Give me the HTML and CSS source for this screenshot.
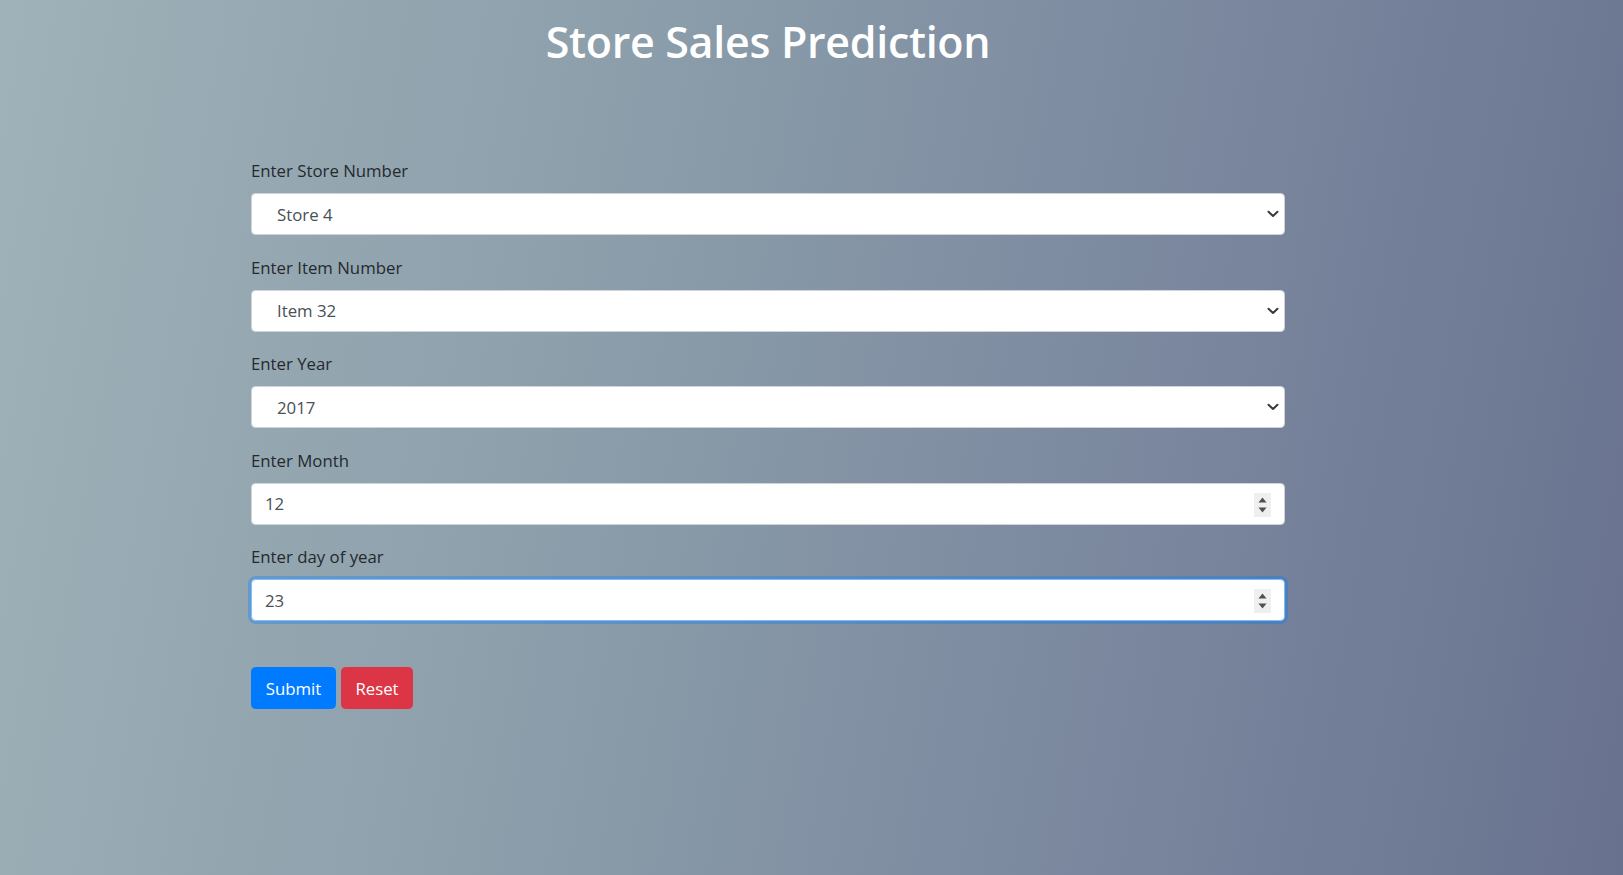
FILE: index.html
```html
<!DOCTYPE html>
<html lang="en">
<head>
<meta charset="utf-8">
<title>Store Sales Prediction</title>
<link rel="stylesheet" href="styles.css">
</head>
<body>
<div class="page">
  <h1 class="title">Store Sales Prediction</h1>
  <form class="form">
    <div class="group">
      <label class="label">Enter Store Number</label>
      <div class="control-wrap">
        <select class="control select"><option>Store 4</option></select>
        <svg class="chevron" width="12" height="8" viewBox="0 0 12 8"><path d="M1.5 1.8 L6 6 L10.5 1.8" fill="none" stroke="#343a40" stroke-width="2" stroke-linecap="round" stroke-linejoin="round"/></svg>
      </div>
    </div>
    <div class="group">
      <label class="label">Enter Item Number</label>
      <div class="control-wrap">
        <select class="control select"><option>Item 32</option></select>
        <svg class="chevron" width="12" height="8" viewBox="0 0 12 8"><path d="M1.5 1.8 L6 6 L10.5 1.8" fill="none" stroke="#343a40" stroke-width="2" stroke-linecap="round" stroke-linejoin="round"/></svg>
      </div>
    </div>
    <div class="group">
      <label class="label">Enter Year</label>
      <div class="control-wrap">
        <select class="control select"><option>2017</option></select>
        <svg class="chevron" width="12" height="8" viewBox="0 0 12 8"><path d="M1.5 1.8 L6 6 L10.5 1.8" fill="none" stroke="#343a40" stroke-width="2" stroke-linecap="round" stroke-linejoin="round"/></svg>
      </div>
    </div>
    <div class="group">
      <label class="label">Enter Month</label>
      <div class="control-wrap">
        <input class="control input" type="text" value="12">
        <div class="spinner">
          <svg width="9" height="6" viewBox="0 0 9 6"><path d="M4.5 0.5 L8.5 5.5 L0.5 5.5 Z" fill="#505050"/></svg>
          <svg width="9" height="6" viewBox="0 0 9 6"><path d="M0.5 0.5 L8.5 0.5 L4.5 5.5 Z" fill="#505050"/></svg>
        </div>
      </div>
    </div>
    <div class="group">
      <label class="label">Enter day of year</label>
      <div class="control-wrap">
        <input class="control input focused" type="text" value="23">
        <div class="spinner">
          <svg width="9" height="6" viewBox="0 0 9 6"><path d="M4.5 0.5 L8.5 5.5 L0.5 5.5 Z" fill="#505050"/></svg>
          <svg width="9" height="6" viewBox="0 0 9 6"><path d="M0.5 0.5 L8.5 0.5 L4.5 5.5 Z" fill="#505050"/></svg>
        </div>
      </div>
    </div>
    <div class="actions">
      <button type="button" class="btn btn-primary">Submit</button>
      <button type="button" class="btn btn-danger">Reset</button>
    </div>
  </form>
</div>
</body>
</html>
```

FILE: styles.css
```css
html, body {
  margin: 0;
  padding: 0;
}
body {
  min-height: 100vh;
  background: linear-gradient(100deg, #9fb2b9 0%, #8c9fab 35%, #7a879e 70%, #68728f 100%);
  font-family: "Open Sans", "Noto Sans", sans-serif;
  color: #25292d;
}
.page {
  width: 1536px;
}
.title {
  margin: 0;
  padding-top: 17px;
  text-align: center;
  color: #ffffff;
  font-size: 43px;
  font-weight: 600;
  line-height: 50px;
  letter-spacing: -0.3px;
}
.form {
  width: 1034px;
  margin: 91px auto 0;
}
.group {
  display: flex;
  flex-direction: column;
  margin-bottom: 19.5px;
}
.label {
  font-size: 16.8px;
  line-height: 26px;
  margin-bottom: 9px;
  color: #25292d;
}
.control-wrap {
  position: relative;
}
.control {
  box-sizing: border-box;
  display: block;
  width: 100%;
  height: 42px;
  margin: 0;
  border: 1px solid #ced4da;
  border-radius: 4.5px;
  background: #ffffff;
  color: #495057;
  font-family: "Open Sans", "Noto Sans", sans-serif;
  font-size: 16.8px;
  outline: none;
}
.select {
  -webkit-appearance: none;
  appearance: none;
  padding: 0 40px 0 25px;
}
.input {
  padding: 0 40px 0 13px;
}
.focused {
  border-color: #80bdff;
  box-shadow: 0 0 0 3px rgba(0, 123, 255, 0.32);
}
.chevron {
  position: absolute;
  right: 6px;
  top: 17px;
}
.spinner {
  position: absolute;
  right: 14px;
  top: 10px;
  width: 17px;
  height: 24px;
  background: #efefef;
  display: flex;
  flex-direction: column;
  align-items: center;
  justify-content: center;
  gap: 4px;
}
.spinner svg {
  display: block;
}
.actions {
  display: flex;
  gap: 5px;
  margin-top: 46px;
}
.btn {
  height: 42px;
  border: 1px solid transparent;
  border-radius: 4.5px;
  color: #ffffff;
  font-family: "Open Sans", "Noto Sans", sans-serif;
  font-size: 16.8px;
  padding: 0 10px;
  cursor: pointer;
}
.btn-primary {
  background: #007bff;
  border-color: #007bff;
  width: 85px;
}
.btn-danger {
  background: #dc3545;
  border-color: #dc3545;
  width: 72px;
}
```
